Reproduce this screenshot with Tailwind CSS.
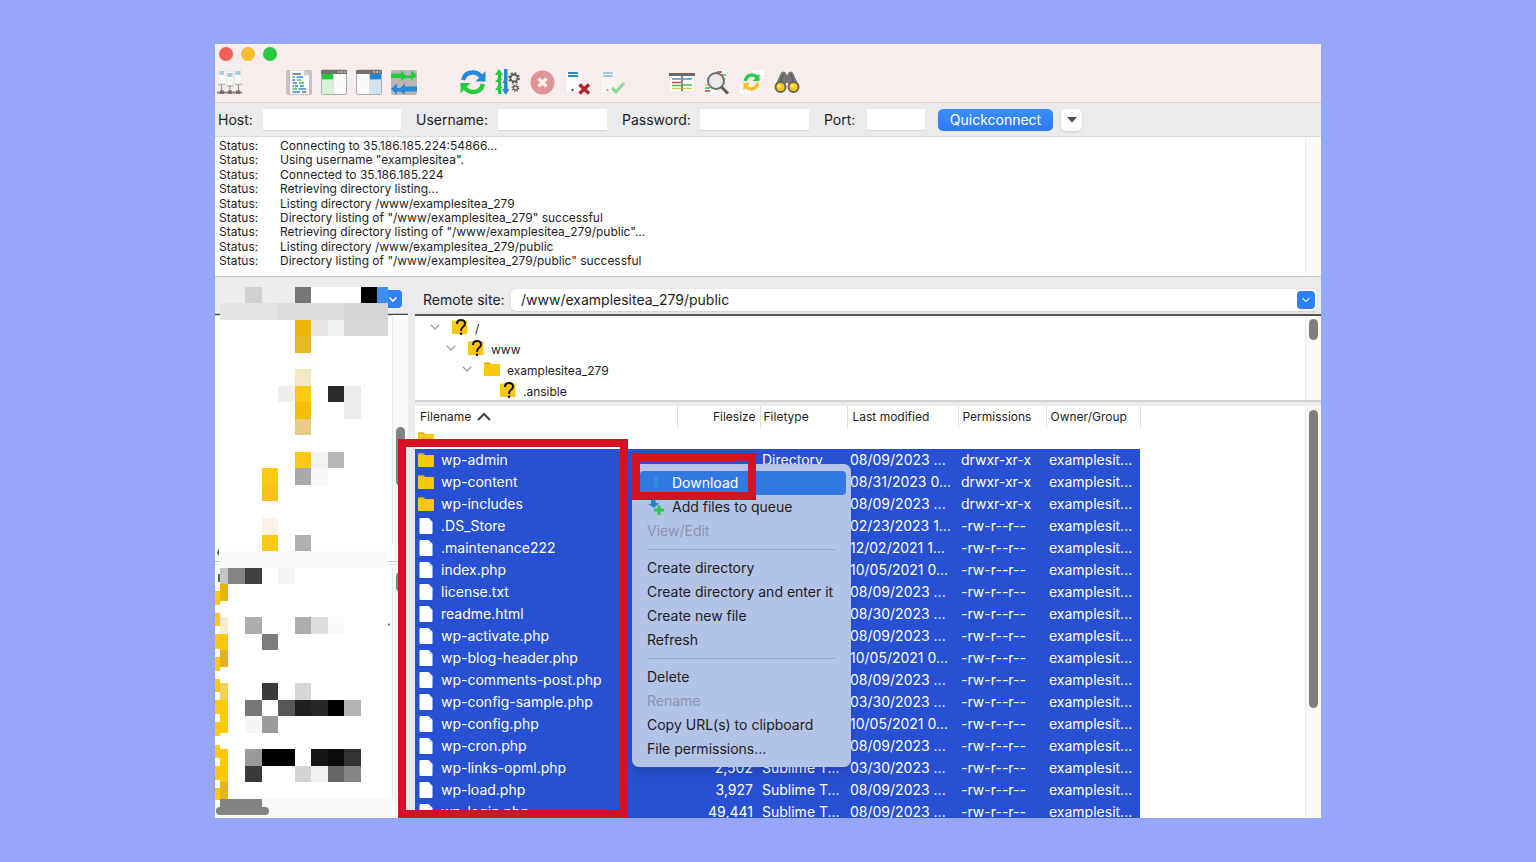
<!DOCTYPE html>
<html lang="en">
<head>
    <meta charset="UTF-8">
    <meta name="viewport" content="width=device-width, initial-scale=1.0">
    <title>FileZilla</title>
    <script src="https://cdn.jsdelivr.net/npm/@tailwindcss/browser@4"></script>
</head>
<body class="bg-[#96a6f9] font-['Inter','Liberation_Sans',sans-serif] text-[#1d1d1d]">
    <svg class="hidden">
        <symbol id="folder" viewBox="0 0 16 14"><path d="M0 1.5Q0 .5 1 .5H5.5L7 2H15Q16 2 16 3V13Q16 14 15 14H1Q0 14 0 13Z" fill="#fcc70f"/><path d="M0 1.5Q0 .5 1 .5H5.5L7 2H0Z" fill="#dfae12"/></symbol>
        <symbol id="unknown" viewBox="0 0 16 16"><path d="M0 1.500H15.500V15H0Z" fill="#fcc70f"/><path d="M5 5Q5 1 9 1T13 4.500Q13 6.500 10.800 8Q9 9.300 9 12" fill="none" stroke="#111" stroke-width="2"/><circle cx="9" cy="14.700" r="1.300" fill="#111"/></symbol>
        <symbol id="file" viewBox="0 0 14 16"><path d="M1.500 0H9.500L13.500 4V15Q13.500 16 12.500 16H1.500Q.5 16 .5 15V1Q.5 0 1.500 0Z" fill="#fff"/><path d="M9.500 0V4H13.500Z" fill="#e4eafa"/></symbol>
        <symbol id="chevron" viewBox="0 0 10 6"><path d="M.8.8 5 5 9.200.8" fill="none" stroke="currentColor" stroke-width="1.300"/></symbol>
    </svg>

    <div class="h-screen min-h-[700px] px-[215px] py-11">
        <div class="flex flex-col h-full overflow-hidden bg-[#ebebeb]">

            <!-- title bar and toolbar -->
            <header class="shrink-0 h-[59px] pt-[3px] bg-[#f6edec] border-b border-[#d8d2d1]">
                <div class="flex gap-2 pl-1">
                    <span class="size-3.5 rounded-full bg-[#f25f58]"></span>
                    <span class="size-3.5 rounded-full bg-[#f9bc2e]"></span>
                    <span class="size-3.5 rounded-full bg-[#28c840]"></span>
                </div>
                <div class="flex gap-[43px] pl-0.5 pt-2">
                    <button aria-label="Site manager" class="size-[26px]">
                        <svg viewBox="0 0 26 26"><path d="M2 1H8V15H2ZM10 2.500H16V16H10ZM18 1H24V15H18Z" fill="#fff" stroke="#ddd6d5" stroke-width=".5"/><path d="M2.500 3H7M2.500 5H7M10.500 5H15.500M10.500 7H15.500M18.500 3H23.500M18.500 5H23.500" stroke="#4a97cc" stroke-width="1.200"/><path d="M1 15.500H8M9.500 17H16.500M18 15.500H25" stroke="#a8c9b0" stroke-width="1.500"/><path d="M4.500 16V22M13 17V22M21.500 16V22" stroke="#999" stroke-width="1.200"/><path d="M0 23.500H25" stroke="#8b8583" stroke-width="2"/><path d="M3 21.500H7V25H3ZM11 21.500H15V25H11ZM19 21.500H23V25H19Z" fill="#77716f"/></svg>
                    </button>
                    <div class="flex gap-[9px]">
                        <button aria-label="Toggle message log" class="size-[26px]">
                            <svg viewBox="0 0 26 26"><rect x="0" y="1" width="26" height="25" rx="2" fill="#c6c2c1"/><path d="M4 1.500H18L23 6.500V25H4Z" fill="#fbfbfb"/><path d="M18 1.500V6.500H23Z" fill="#ccc"/><path d="M6.500 5H15M6.500 11H9M9 17H12M16 23H20" stroke="#666" stroke-width="1.500"/><path d="M6.500 8H9M11 11H15M13 14H18M6.500 20H11" stroke="#37c452" stroke-width="1.500"/><path d="M10.500 8H17M6.500 14H11M14 17H18M12.500 20H20M6.500 17H8M6.500 23H14" stroke="#2f8ad6" stroke-width="1.500"/></svg>
                        </button>
                        <button aria-label="Toggle local tree" class="size-[26px]">
                            <svg viewBox="0 0 26 26"><rect x=".5" y="1" width="25" height="24.500" rx="1.500" fill="#fafafa" stroke="#b0acab"/><path d="M0 2Q0 1 1 1H25Q26 1 26 2V5H0Z" fill="#737170"/><path d="M17 3H19M20 3H22M23 3H24.500" stroke="#eee"/><path d="M1 5H12V10.500H1Z" fill="#21ca3d"/><path d="M1 11H12V25H1Z" fill="#d8f0d8"/><path d="M12.500 5V25" stroke="#ddd"/></svg>
                        </button>
                        <button aria-label="Toggle remote tree" class="size-[26px]">
                            <svg viewBox="0 0 26 26"><rect x=".5" y="1" width="25" height="24.500" rx="1.500" fill="#fafafa" stroke="#b0acab"/><path d="M0 2Q0 1 1 1H25Q26 1 26 2V5H0Z" fill="#737170"/><path d="M17 3H19M20 3H22M23 3H24.500" stroke="#eee"/><path d="M14 5H25V10.500H14Z" fill="#2384d8"/><path d="M14 11H25V25H14Z" fill="#d3e2f0"/><path d="M13.500 5V25" stroke="#ddd"/></svg>
                        </button>
                        <button aria-label="Toggle transfer queue" class="size-[26px]">
                            <svg viewBox="0 0 26 26"><rect y="1" width="26" height="25" rx="2" fill="#b9b6b5"/><path d="M0 4.500H10V1.500L15 6.500H20V1.500L26 6.500 20 11.500V9H15L10 11.500V9H0Z" fill="#25cb3e"/><path d="M26 17.500H14V14.500L9 19H6V14.500L0 20 6 25.500V22.500H9L14 25V22.500H26Z" fill="#2789dc"/></svg>
                        </button>
                    </div>
                    <div class="flex gap-[9px]">
                        <button aria-label="Refresh" class="size-[26px]">
                            <svg viewBox="0 0 26 26"><path d="M3 11Q5 3.500 13 3.500Q18 3.500 21 7.500" fill="none" stroke="#2588db" stroke-width="4.500"/><path d="M25.500 2V12.500H15.500Z" fill="#2588db"/><path d="M23 15Q21 23 13 23Q8 23 5 19" fill="none" stroke="#24cb40" stroke-width="4.500"/><path d="M.5 24.500V14H10.500Z" fill="#24cb40"/></svg>
                        </button>
                        <button aria-label="Process queue" class="size-[26px]">
                            <svg viewBox="0 0 26 26"><path d="M3 25V21H0L3 17V13H0L3 9V6H0L4 0 8 6H6V9L7.500 11H6V17L7.500 19H6V25Z" fill="#24cb40"/><path d="M9 0H12.500V20H14.500L10.700 26 7 20H9V14H7.500L9 11Z" fill="#2588db"/><circle cx="19" cy="9" r="3.500" fill="none" stroke="#555" stroke-width="1.800"/><circle cx="19" cy="9" r="5" fill="none" stroke="#555" stroke-width="1.700" stroke-dasharray="1.960 1.960"/><circle cx="20.500" cy="19" r="2" fill="none" stroke="#666" stroke-width="1.400"/><circle cx="20.500" cy="19" r="3.300" fill="none" stroke="#666" stroke-width="1.300" stroke-dasharray="1.300 1.300"/></svg>
                        </button>
                        <button aria-label="Cancel" class="size-[26px]">
                            <svg viewBox="0 0 26 26"><circle cx="12.500" cy="13.500" r="12" fill="#df9498"/><path d="M8.500 9.500 16.500 17.500M16.500 9.500 8.500 17.500" stroke="#fbefef" stroke-width="3.400"/></svg>
                        </button>
                        <button aria-label="Disconnect" class="size-[26px]">
                            <svg viewBox="0 0 26 26"><path d="M1 2H17V24H1Z" fill="#fdfbfb" stroke="#e6dddc" stroke-width=".5"/><path d="M3 4H13M3 7H13" stroke="#2d88cc" stroke-width="1.800"/><circle cx="7.500" cy="21" r="1.200" fill="#555"/><path d="M14.500 15.500 24 24.500M24 15.500 14.500 24.500" stroke="#b81f28" stroke-width="3.400"/></svg>
                        </button>
                        <button aria-label="Reconnect" class="size-[26px]">
                            <svg viewBox="0 0 26 26"><path d="M1 2H17V24H1Z" fill="#faf5f5" stroke="#eee4e3" stroke-width=".5"/><path d="M3 4H13M3 7H13" stroke="#9fc6e5" stroke-width="1.800"/><circle cx="7.500" cy="21" r="1.200" fill="#aaa"/><path d="M12 19 16 23 24 14" fill="none" stroke="#8adb9a" stroke-width="3.200"/></svg>
                        </button>
                    </div>
                    <div class="flex gap-[9px]">
                        <button aria-label="Filters" class="size-[26px]">
                            <svg viewBox="0 0 26 26"><path d="M1 6H25V22H1Z" fill="#fdfdfd"/><path d="M0 4H26V7H0Z" fill="#6b6867"/><path d="M13 7V22" stroke="#666" stroke-width="1.500"/><path d="M3 10H12M14 10H23" stroke="#3a94cf" stroke-width="1.500"/><path d="M3 13.500H12" stroke="#d5434a" stroke-width="1.500"/><path d="M14 16H23M3 16.500H12" stroke="#49ba5e" stroke-width="1.500"/><path d="M3 19.500H12M14 19.500H23" stroke="#d8cc4d" stroke-width="1.500"/></svg>
                        </button>
                        <button aria-label="Directory comparison" class="size-[26px]">
                            <svg viewBox="0 0 26 26"><path d="M13 1H23V13H13ZM1 13H12V24H1Z" fill="#fff"/><path d="M13 3H18M1 22H6" stroke="#c93038" stroke-width="1.600"/><path d="M18 6H22M1 19H6" stroke="#36bd4e" stroke-width="1.500"/><path d="M19 10H22M1 16H4" stroke="#e4ca35" stroke-width="1.500"/><circle cx="12" cy="12" r="8" fill="#e9e9ea" stroke="#716e6d" stroke-width="2"/><path d="M17 17.500 24 24.500" stroke="#5e5b5a" stroke-width="3"/></svg>
                        </button>
                        <button aria-label="Synchronized browsing" class="size-[26px]">
                            <svg viewBox="0 0 26 26"><path d="M14 1H25V12H14ZM1 15H12V25H1Z" fill="#fff"/><path d="M19 7H25M20 10H25M1 20H12M6 15V25" stroke="#e5dfde" stroke-width=".8"/><path d="M6 12Q8 6 13 6Q16 6 18 8" fill="none" stroke="#30c84b" stroke-width="3.400"/><path d="M20.500 4.500V12H13.500Z" fill="#30c84b"/><path d="M19 14Q17 20 12 20Q9 20 7.500 18" fill="none" stroke="#f4bd1d" stroke-width="3.400"/><path d="M4.500 21V14H11.500Z" fill="#f4bd1d"/></svg>
                        </button>
                        <button aria-label="Find files" class="size-[26px]">
                            <svg viewBox="0 0 26 26"><path d="M7 4Q9 1 12 4L12.500 6H13.500L14 4Q17 1 19 4L25 17 15 20 14 14H12L11 20 1 17Z" fill="#767473"/><path d="M9 5 7 12M17 5 19 12" stroke="#5b5958" stroke-width="1.200"/><circle cx="6.500" cy="18" r="5" fill="#fbc714" stroke="#6c6657" stroke-width="2"/><circle cx="19.500" cy="18" r="5" fill="#fbc714" stroke="#6c6657" stroke-width="2"/><circle cx="5.500" cy="17" r="1.500" fill="#fdec9b"/><circle cx="18.500" cy="17" r="1.500" fill="#fdec9b"/></svg>
                        </button>
                    </div>
                </div>
            </header>

            <!-- quickconnect -->
            <form class="flex shrink-0 items-center h-[34px] pl-[3px] border-b border-[#dadada] text-sm">
                <label for="host" class="w-[45px]">Host:</label>
                <input id="host" class="w-[138px] h-[22px] bg-white border-b border-[#d5d5d5]">
                <label for="username" class="w-[97px] pl-[15px]">Username:</label>
                <input id="username" class="w-[109px] h-[22px] bg-white border-b border-[#d5d5d5]">
                <label for="password" class="w-[93px] pl-[15px]">Password:</label>
                <input id="password" type="password" class="w-[109px] h-[22px] bg-white border-b border-[#d5d5d5]">
                <label for="port" class="w-[58px] pl-[15px]">Port:</label>
                <input id="port" class="w-[58px] h-[22px] bg-white border-b border-[#d5d5d5]">
                <button type="button" class="w-[115px] h-[22px] ml-[13px] rounded-[5px] bg-linear-to-b from-[#3b90fb] to-[#2e77fb] text-white leading-5">Quickconnect</button>
                <button type="button" aria-label="History" class="flex items-center justify-center w-[21px] h-[22px] ml-2 rounded-[5px] bg-white shadow-sm">
                    <svg viewBox="0 0 10 6" class="w-2.5"><path d="M0 0H10L5 5.500Z" fill="#4a4a4a"/></svg>
                </button>
            </form>

            <!-- message log -->
            <div class="flex shrink-0 h-[140px] bg-white border-b border-[#c4c4c4]">
                <div id="log" class="flex flex-1 flex-col justify-between h-[131px] pl-1 pt-0.5 text-xs leading-[14px]"></div>
                <div class="w-4 bg-[#fafafa] border-l border-[#ececec]"></div>
            </div>

            <div class="flex flex-1 min-h-0">
                <!-- local side, redacted -->
                <section class="shrink-0 w-[193px]">
                    <svg viewBox="0 0 193 541" class="w-[193px] h-[541px]">
                        <path d="M0 38H193V541H0Z" fill="#fff"/>
                        <path d="M0 37.500H193" stroke="#444" stroke-width="1.500"/>
                        <path d="M177.500 38V267H193V38ZM177.500 290V525H193V290Z" fill="#fafafa"/>
                        <path d="M177.500 38V267M177.500 290V525" stroke="#e8e8e8"/>
                        <path d="M0 284.500H193" stroke="#c9c9c9"/><path d="M0 287.500H193" stroke="#e0e0e0"/>
                        <path d="M0 521H178V541H0Z" fill="#fafafa"/>
                        <rect x="181" y="150" width="9" height="59" rx="4.500" fill="#828282"/>
                        <rect x="181" y="295" width="9" height="20" rx="4.500" fill="#828282"/>
                        <rect x="1" y="530" width="53" height="8" rx="4" fill="#828282"/>
                        <rect x="168" y="13" width="19" height="18" rx="4" fill="#2f80fb"/>
                        <path d="M174.500 20.500 178 24 181.500 20.500" fill="none" stroke="#fff" stroke-width="1.600"/>
                        <path d="M4 272Q0 275.500 4 279ZM3 297H5V305H3Z" fill="#666"/>
                        <circle cx="174" cy="347.500" r="1" fill="#555"/>
                        <path d="M0 314H5V328H0ZM0 336H5V349H0ZM0 357H5V372H0V380H5V394H0ZM0 402H5V415H0V423H5V437H0V445H5V459H0ZM0 468H5V481H0V489H5V503H0V511H5V523H0Z" fill="#fcc808"/>
                        <g id="mosaic" transform="translate(30 9.700) scale(16.520)" shape-rendering="crispEdges"></g>
                    </svg>
                </section>

                <!-- remote side -->
                <section class="flex flex-1 flex-col min-w-0 ml-[7px]">
                    <div class="flex shrink-0 items-center h-[39px] pt-2 pl-2 pr-1 border-b-2 border-[#555] text-sm">
                        <label for="remote" class="w-[88px]">Remote site:</label>
                        <div class="flex flex-1 items-center h-[22px] pr-0.5 rounded-[5px] bg-white shadow-sm">
                            <input id="remote" class="flex-1 pl-2.5" value="/www/examplesitea_279/public">
                            <button aria-label="Show paths" class="flex items-center justify-center size-[18px] rounded-[4px] bg-[#2f80fb] text-white">
                                <svg class="w-2 h-1.5 stroke-2"><use href="#chevron"/></svg>
                            </button>
                        </div>
                    </div>

                    <div class="flex shrink-0 h-[86px] bg-white border-b-2 border-[#cfcfcf] text-xs">
                        <ul id="tree" class="flex-1 overflow-hidden"></ul>
                        <div class="w-4 px-[3px] py-[3px] bg-[#fafafa] border-l border-[#ececec]">
                            <div class="w-[9px] h-[21px] rounded-full bg-[#7f7f7f]"></div>
                        </div>
                    </div>

                    <div class="relative flex flex-1 min-h-0 mt-1 bg-white">
                        <div class="flex-1 overflow-hidden">
                            <table class="w-[725px] table-fixed">
                                <thead class="text-xs">
                                    <tr class="h-[22px]">
                                        <th class="w-[262px] pl-[5px] text-left font-normal border-r border-[#e0e0e0]">Filename <svg viewBox="0 0 14 9" class="inline w-3.5 ml-0.5 -mt-0.5"><path d="M1 8 7 2 13 8" fill="none" stroke="#444" stroke-width="2.200"/></svg></th>
                                        <th class="w-[83px] pr-1 text-right font-normal border-r border-[#e0e0e0]">Filesize</th>
                                        <th class="w-[87px] pl-[3px] text-left font-normal border-r border-[#e0e0e0]">Filetype</th>
                                        <th class="w-[111px] pl-[5px] text-left font-normal border-r border-[#e0e0e0]">Last modified</th>
                                        <th class="w-[88px] pl-1 text-left font-normal border-r border-[#e0e0e0]">Permissions</th>
                                        <th class="w-[94px] pl-1 text-left font-normal border-r border-[#e0e0e0]">Owner/Group</th>
                                    </tr>
                                    <tr class="h-[21px]">
                                        <td colspan="6" class="pl-[3px]"><svg class="w-4 h-3.5"><use href="#folder"/></svg></td>
                                    </tr>
                                </thead>
                                <tbody id="files" class="bg-[#2850d2] text-white text-sm whitespace-nowrap"></tbody>
                            </table>
                        </div>
                        <div class="w-4 px-[3px] py-1 bg-[#fafafa] border-l border-[#ececec]">
                            <div class="w-[9px] h-[298px] rounded-full bg-[#7f7f7f]"></div>
                        </div>

                        <!-- context menu -->
                        <div role="menu" class="absolute left-[217px] top-[58px] flex flex-col w-[219px] pt-[7px] pb-1.5 rounded-[7px] bg-[#b2c3e7] shadow-lg text-sm">
                            <button role="menuitem" class="flex items-center h-6 ml-2 mr-[5px] pl-2 gap-2 rounded-[4px] bg-[#3279e4] text-white">
                                <svg viewBox="0 0 16 16" class="size-4"><path d="M6.500 0H9.500V9H12L8 15.500 4 9H6.500Z" fill="#3090dc"/></svg>Download
                            </button>
                            <button role="menuitem" class="flex items-center h-6 pl-4 gap-2">
                                <svg viewBox="0 0 16 16" class="size-4"><path d="M3 0H7L8 4H11L6 9 0 5H3Z" fill="#2783c9"/><path d="M9.500 6H12.500V9.500H16V12.500H12.500V16H9.500V12.500H6V9.500H9.500Z" fill="#2cc94b"/></svg>Add files to queue
                            </button>
                            <button role="menuitem" disabled class="h-6 pl-[15px] text-left text-[#8794b4]">View/Edit</button>
                            <hr class="my-1.5 mx-[15px] border-[#94a6cb]">
                            <button role="menuitem" class="h-6 pl-[15px] text-left">Create directory</button>
                            <button role="menuitem" class="h-6 pl-[15px] text-left whitespace-nowrap">Create directory and enter it</button>
                            <button role="menuitem" class="h-6 pl-[15px] text-left">Create new file</button>
                            <button role="menuitem" class="h-6 pl-[15px] text-left">Refresh</button>
                            <hr class="my-1.5 mx-[15px] border-[#94a6cb]">
                            <button role="menuitem" class="h-6 pl-[15px] text-left">Delete</button>
                            <button role="menuitem" disabled class="h-6 pl-[15px] text-left text-[#8794b4]">Rename</button>
                            <button role="menuitem" class="h-6 pl-[15px] text-left">Copy URL(s) to clipboard</button>
                            <button role="menuitem" class="h-6 pl-[15px] text-left">File permissions...</button>
                        </div>

                        <!-- highlight frames -->
                        <div class="absolute -left-[17px] top-[33px] bottom-0 w-[230px] border-8 border-[#d51124] pointer-events-none">
                            <div class="w-[9px] h-full bg-[#e6e7ea]"></div>
                        </div>
                        <div class="absolute left-[217px] top-[47px] w-[124px] h-[47px] border-8 border-[#d51124] pointer-events-none"></div>
                    </div>
                </section>
            </div>
        </div>
    </div>

    <script>
        const messages = [
            'Connecting to 35.186.185.224:54866...',
            'Using username "examplesitea".',
            'Connected to 35.186.185.224',
            'Retrieving directory listing...',
            'Listing directory /www/examplesitea_279',
            'Directory listing of "/www/examplesitea_279" successful',
            'Retrieving directory listing of "/www/examplesitea_279/public"...',
            'Listing directory /www/examplesitea_279/public',
            'Directory listing of "/www/examplesitea_279/public" successful',
        ]
        document.querySelector('#log').innerHTML = messages.map(text =>
            `<div class="flex"><span class="w-[61px]">Status:</span><span>${text}</span></div>`
        ).join('')

        const tree = [
            ['/', 'unknown', true],
            ['www', 'unknown', true],
            ['examplesitea_279', 'folder', true],
            ['.ansible', 'unknown', false],
        ]
        document.querySelector('#tree').innerHTML = tree.map(([name, icon, open], level) => `
            <li class="flex items-center h-[21px] gap-1.5" style="padding-left:${15 + level * 16}px">
                <svg class="w-2.5 h-1.5 mr-1.5 text-[#a0a0a0]">${open ? '<use href="#chevron"/>' : ''}</svg>
                <svg class="size-4 mr-px"><use href="#${icon}"/></svg><span class="pt-1">${name}</span>
            </li>`
        ).join('')

        // name, icon, size, type, modified, permissions
        const dir = 'drwxr-xr-x', reg = '-rw-r--r--'
        const files = [
            ['wp-admin', 'folder', '', 'Directory', '08/09/2023 ...', dir],
            ['wp-content', 'folder', '', '', '08/31/2023 0...', dir],
            ['wp-includes', 'folder', '', '', '08/09/2023 ...', dir],
            ['.DS_Store', 'file', '', '', '02/23/2023 1...', reg],
            ['.maintenance222', 'file', '', '', '12/02/2021 1...', reg],
            ['index.php', 'file', '', '', '10/05/2021 0...', reg],
            ['license.txt', 'file', '', '', '08/09/2023 ...', reg],
            ['readme.html', 'file', '', '', '08/30/2023 ...', reg],
            ['wp-activate.php', 'file', '', '', '08/09/2023 ...', reg],
            ['wp-blog-header.php', 'file', '', '', '10/05/2021 0...', reg],
            ['wp-comments-post.php', 'file', '', '', '08/09/2023 ...', reg],
            ['wp-config-sample.php', 'file', '', '', '03/30/2023 ...', reg],
            ['wp-config.php', 'file', '', '', '10/05/2021 0...', reg],
            ['wp-cron.php', 'file', '', '', '08/09/2023 ...', reg],
            ['wp-links-opml.php', 'file', '2,502', 'Sublime T...', '03/30/2023 ...', reg],
            ['wp-load.php', 'file', '3,927', 'Sublime T...', '08/09/2023 ...', reg],
            ['wp-login.php', 'file', '49,441', 'Sublime T...', '08/09/2023 ...', reg],
        ]
        document.querySelector('#files').innerHTML = files.map(([name, icon, size, type, modified, perms]) => `
            <tr class="h-[22px] leading-[22px]">
                <td><div class="flex items-center gap-[7px] pl-[3px]"><svg class="w-4 h-4"><use href="#${icon}"/></svg>${name}</div></td>
                <td class="pr-[7px] text-right">${size}</td>
                <td class="pl-0.5">${type}</td>
                <td class="pl-[3px]">${modified}</td>
                <td class="pl-[3px]">${perms}</td>
                <td class="pl-[3px]">examplesit...</td>
            </tr>`
        ).join('')

        // column, row, width in cells, colour
        const cells = [
            [-1.5, 0, 1.5, '#ececec'], [0, 0, 1, '#d0d0d0'], [1, 0, 2, '#ececec'], [3, 0, 1, '#767676'], [4, 0, 3, '#fff'], [7, 0, 1, '#000'], [8, 0, .67, '#3a8dfb'],
            [-1.5, 1, 3.5, '#e3e3e3'], [2, 1, 4, '#dcdcdc'], [6, 1, 2.67, '#d5d5d5'],
            [3, 2, 1, '#ebb50a'], [4, 2, 1, '#e9e5e1'], [5, 2, 1, '#f1f1f1'], [6, 2, 2.67, '#d8d8d8'],
            [3, 3, 1, '#e4b827'], [3, 5, 1, '#f4e8c2'],
            [2, 6, 1, '#efefef'], [3, 6, 1, '#fccb10'], [5, 6, 1, '#2a2a2a'], [6, 6, 1, '#ebebeb'],
            [3, 7, 1, '#f3bf02'], [6, 7, 1, '#ebebeb'], [3, 8, 1, '#ebca86'],
            [3, 10, 1, '#fcc715'], [4, 10, 1, '#f2f2f5'], [5, 10, 1, '#b6b6b6'],
            [1, 11, 1, '#fdc816'], [3, 11, 1, '#a9a9a9'], [4, 11, 1, '#f8f8f9'],
            [1, 12, 1, '#fac11a'], [1, 14, 1, '#fdf2e2'],
            [1, 15, 1, '#fdc816'], [3, 15, 1, '#b0b0b0'],
            [-1.5, 16, 10.17, '#fafafa'],
            [-1.5, 17, .5, '#c4c4c4'], [-1, 17, 1, '#858585'], [0, 17, 1, '#404040'], [2, 17, 1, '#f5f5f5'],
            [-1.5, 18, .5, '#e9b50d'],
            [-1.5, 20, .5, '#f5ecd2'], [0, 20, 1, '#adadad'], [3, 20, 1, '#adadad'], [4, 20, 1, '#dcdcdc'], [5, 20, 1, '#fafafa'],
            [-1.5, 21, .5, '#f9c80e'], [1, 21, 1, '#7d7d7d'], [-1.5, 22, .5, '#e3b21e'],
            [-1.5, 24, .5, '#f3d057'], [1, 24, 1, '#3a3a3a'], [3, 24, 1, '#d6d6d6'],
            [-1.5, 25, .5, '#fcca08'], [0, 25, 1, '#777'], [2, 25, 1, '#575757'], [3, 25, 1, '#202020'], [4, 25, 1, '#262626'], [5, 25, 1, '#000'], [6, 25, 1, '#b3b3b3'],
            [-1.5, 26, .5, '#fcca08'], [0, 26, 1, '#f5f5f5'], [1, 26, 1, '#9b9b9b'],
            [-1.5, 28, .5, '#fcc808'], [0, 28, 1, '#999'], [1, 28, 2, '#000'], [4, 28, 1, '#161616'], [5, 28, 1, '#0b0b0b'], [6, 28, 1, '#333'],
            [-1.5, 29, .5, '#fcc808'], [0, 29, 1, '#3a3a3a'], [3, 29, 1, '#d3d3d3'], [4, 29, 1, '#f0f0f0'], [5, 29, 1, '#666'], [6, 29, 1, '#858585'],
            [-1.5, 30, .5, '#e6b31b'], [-1.5, 31, 2.5, '#828282'],
        ]
        document.querySelector('#mosaic').innerHTML = cells.map(([x, y, w, fill]) =>
            `<rect x="${x}" y="${y}" width="${w}" height="${y === 31 ? .75 : 1}" fill="${fill}"/>`
        ).join('')
    </script>
</body>
</html>
